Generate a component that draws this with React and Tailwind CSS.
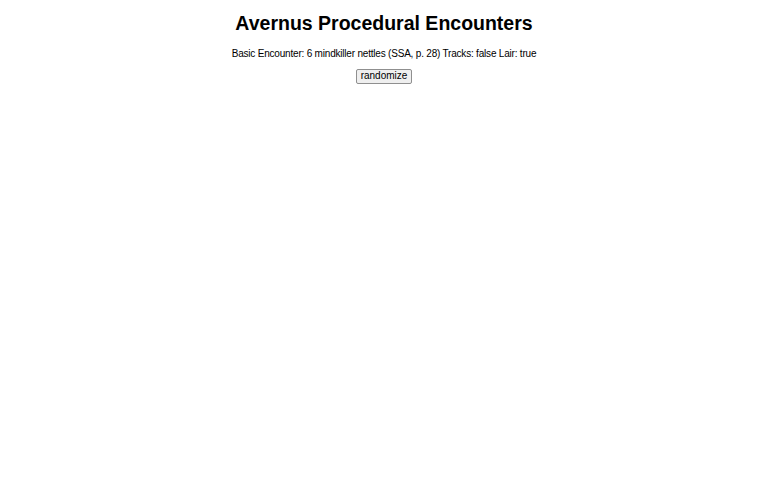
export default function App() {
  return (
    <div className="min-h-[480px] bg-white text-center text-black" style={{ fontFamily: '"Liberation Sans", Arial, sans-serif' }}>
      <h1 className="pt-[12px] text-[19.5px] font-bold leading-[23px]">Avernus Procedural Encounters</h1>
      <p className="mt-[13px] text-[10px] leading-[12px] tracking-[-0.2px]">
        Basic Encounter: 6 mindkiller nettles (SSA, p. 28) Tracks: false Lair: true
      </p>
      <div className="mt-[6px] leading-none">
        <button className="h-[15px] rounded-[2px] border border-[#8f8f8f] bg-[#efefef] px-[4px] text-[10px] leading-[12px]">
          randomize
        </button>
      </div>
    </div>
  );
}
